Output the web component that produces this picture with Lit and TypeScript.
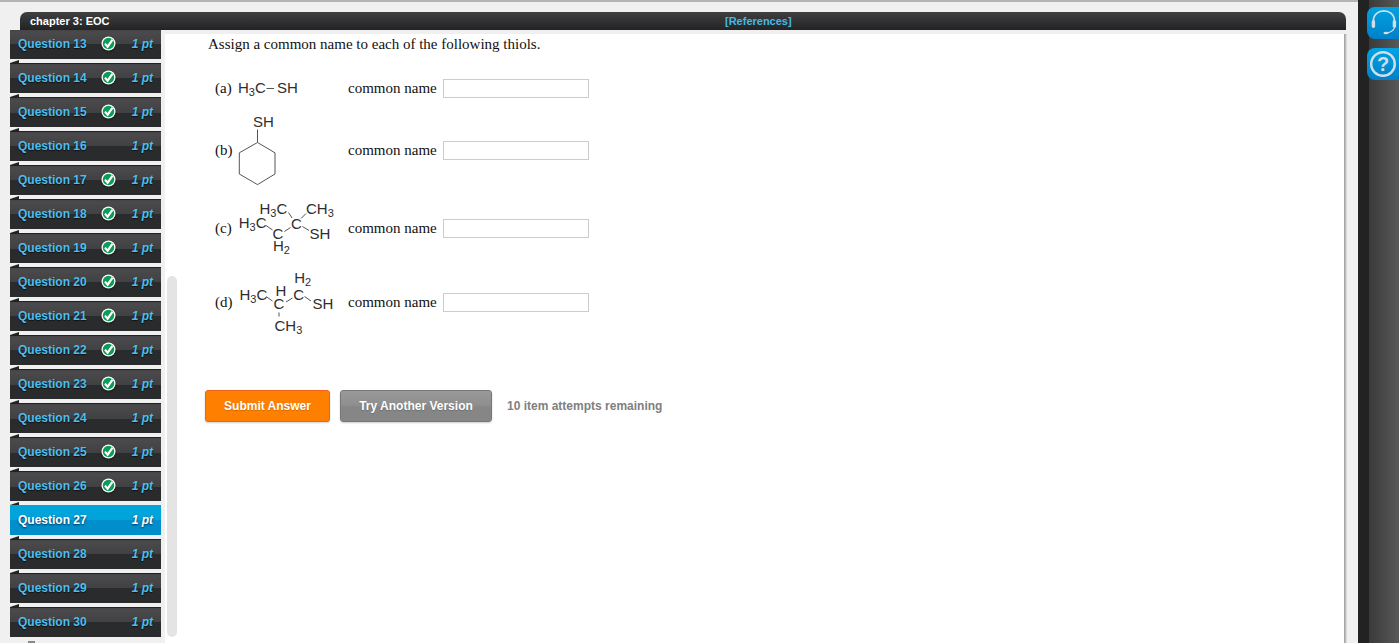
import { LitElement, html, css, svg } from "lit";
import { customElement } from "lit/decorators.js";

type Seg = [number, number, number, number];

const label = (x: number, y: number, s: string) => {
  const parts = s.split(/(\d)/).filter((p) => p !== "");
  let sub = false;
  return svg`<text x=${x} y=${y}>${parts.map((p) => {
    const isNum = /\d/.test(p);
    const dy = isNum ? 3 : sub ? -3 : 0;
    sub = isNum;
    return svg`<tspan class=${isNum ? "sub" : ""} dy=${dy}>${p}</tspan>`;
  })}</text>`;
};

const molecule = (box: [number, number, number, number], texts: [number, number, string][], bonds: Seg[], extra?: unknown) => html`
  <svg class="mol" width=${box[2]} height=${box[3]} viewBox=${box.join(" ")}>
    ${bonds.map(([a, b, c, d]) => svg`<line x1=${a} y1=${b} x2=${c} y2=${d}></line>`)}
    ${extra}
    ${texts.map(([x, y, s]) => label(x, y, s))}
  </svg>`;

const molA = () => molecule([238, 78, 110, 20], [[238, 93, "H3C"], [277, 93, "SH"]], [[266.5, 88.5, 274, 88.5]]);
const molB = () => molecule([238, 112, 110, 76], [[253, 126.5, "SH"]], [[257.5, 129.5, 257.5, 142.5]],
  svg`<polygon points="257.5,142.5 275,152.8 275,174 257.5,184.6 239.3,174 239.3,152.8"></polygon>`);
const molC = () => molecule([238, 198, 110, 60],
  [[259.5, 214.3, "H3C"], [306, 214.3, "CH3"], [291, 228.5, "C"], [238.7, 228.3, "H3C"], [272.6, 239, "C"], [273, 251, "H2"], [309.5, 239, "SH"]],
  [[288.5, 212.5, 292, 218], [306, 213.5, 301, 218.5], [266, 225.5, 272.5, 230], [284.5, 231.5, 290.5, 227.5], [302.5, 226.5, 309, 230.5]]);
const molD = () => molecule([238, 270, 110, 64],
  [[294.2, 283.3, "H2"], [239.5, 300, "H3C"], [275.5, 295.5, "H"], [273.5, 309.3, "C"], [293.3, 300, "C"], [312.5, 308.5, "SH"], [274.5, 330.5, "CH3"]],
  [[266, 296.5, 272.5, 301], [286, 302, 292.5, 298], [304.5, 296.5, 311, 301], [279, 312.5, 279, 316.5]]);

const QUESTIONS = [13, 14, 15, 16, 17, 18, 19, 20, 21, 22, 23, 24, 25, 26, 27, 28, 29, 30];
const UNCHECKED = new Set([16, 24, 27, 28, 29, 30]);
const CURRENT = 27;

@customElement("app-root")
export class AppRoot extends LitElement {
  static styles = css`
    :host { display: block; width: 1399px; height: 643px; overflow: hidden; position: relative; font-family: "Liberation Sans", Arial, sans-serif; }
    .page { display: flex; width: 1399px; height: 643px; }
    .main { width: 1358px; height: 643px; background: #f0f0f0; border-top: 2px solid #b4b4b4; box-sizing: border-box; position: relative; overflow: hidden; padding-top: 10px; }
    .header { margin-left: 20px; width: 1326px; height: 18px; box-sizing: border-box; padding: 0 10px; border-radius: 7px 7px 0 0; background: linear-gradient(#3f4042, #232324); display: flex; align-items: center; font-size: 11px; font-weight: 700; color: #fff; position: relative; }
    .refs { position: absolute; left: 705px; color: #47b9e6; }
    .body { display: flex; height: 613px; }
    .side { width: 165px; box-sizing: border-box; padding-left: 10px; overflow: hidden; flex: none; }
    .q { position: relative; display: grid; grid-template-columns: 83px 15px 1fr; align-items: center; width: 151px; height: 30px; margin-bottom: 4px; box-sizing: border-box; padding: 0 8px 2px 8px; background: linear-gradient(#444446 0, #4a4a4c 2px, #414143 50%, #2a2b2d 50%, #2a2b2d 100%); border-top: 1px solid #222; font-size: 12px; font-weight: 700; color: #4dbfee; text-shadow: 0 1px 1px #111; }
    .q:first-child { margin-top: -1px; border-top-color: #444; }
    .q::before { content: ""; position: absolute; left: 0; top: -4px; width: 9px; height: 3px; background: #222; clip-path: polygon(0 100%, 100% 0, 100% 100%); }
    .q.cur { background: linear-gradient(#00a5dc 0, #00a3da 50%, #008fcd 50%, #008ecb 100%); color: #fff; border-top-color: #00a5dc; text-shadow: 0 1px 2px #035; }
    .pt { font-style: italic; justify-self: end; }
    .check { display: block; filter: drop-shadow(0 1px 1px #0006); }
    .content { width: 1179px; height: 609px; margin-top: 4px; background: #fff; box-shadow: 1px 0 0 #a6a6a6, 2px 0 0 #bdbdbd, 3px 0 0 #dcdcdc; font-family: "Liberation Serif", "Times New Roman", serif; font-size: 15px; color: #111; position: relative; }
    .scroll { position: absolute; left: 2px; top: 242px; width: 10px; height: 361px; background: #e4e4e4; border-radius: 5px; }
    .prompt { height: 20px; line-height: 20px; padding-left: 43px; }
    .rows { padding-left: 50px; }
    .row { display: flex; align-items: center; }
    .ra { margin-top: 24px; height: 20px; }
    .rb { margin-top: 14px; height: 76px; }
    .rc { margin-top: 10px; height: 60px; }
    .rd { margin-top: 12px; height: 64px; }
    .tag { width: 23px; flex: none; }
    .mol { flex: none; overflow: visible; display: block; }
    .mol text { font-family: "Liberation Sans", Arial, sans-serif; font-size: 15px; fill: #2e2e2e; }
    .mol .sub { font-size: 11px; }
    .mol line, .mol polygon { stroke: #555; stroke-width: 1; fill: none; }
    .cn { width: 95px; flex: none; }
    input { width: 146px; height: 19px; box-sizing: border-box; border: 1px solid #ccc; background: #fff; padding: 0; margin: 0; outline: none; }
    .actions { display: flex; align-items: center; margin-top: 56px; padding-left: 40px; font-family: "Liberation Sans", Arial, sans-serif; font-size: 12px; font-weight: 700; }
    .btn { height: 32px; box-sizing: border-box; border-radius: 3px; color: #fff; display: flex; align-items: center; justify-content: center; box-shadow: 0 1px 2px #0003; text-shadow: 0 1px 1px #0003; }
    .submit { width: 125px; background: #ff8000; border: 1px solid #f2631a; }
    .try { width: 152px; margin-left: 10px; background: linear-gradient(#999 0, #8f8f8f 45%, #868686 55%, #868686 100%); border: 1px solid #777; }
    .remain { margin-left: 15px; color: #808080; }
    .rail { width: 41px; height: 643px; box-sizing: border-box; padding: 7px 0 0 9px; background: linear-gradient(90deg, #222 0 11px, #3a3a3a 11px, #585858 100%); display: flex; flex-direction: column; gap: 9px; overflow: hidden; }
    .rb-icon { width: 44px; height: 32px; flex: none; border-radius: 8px; background: linear-gradient(#00a3e2, #0080c8); display: block; }
    .rb-icon text { font-family: "Liberation Sans", Arial, sans-serif; font-weight: 700; font-size: 20px; fill: #cfdfe7; }
    .mark { position: absolute; left: 28px; top: 639px; width: 7px; height: 2px; background: #888; }
  `;

  private check() {
    return html`<svg class="check" width="15" height="15" viewBox="0 0 15 15">
      <circle cx="7.5" cy="7.5" r="7" fill="#fff"></circle>
      <circle cx="7.5" cy="7.5" r="5.7" fill="#0b9c57"></circle>
      <path d="M4 7.6 L6.6 10.6 L11.4 3.8" fill="none" stroke="#fff" stroke-width="2.2"></path>
    </svg>`;
  }

  render() {
    return html`<div class="page">
      <div class="main">
        <div class="header"><span>chapter 3: EOC</span><span class="refs">[References]</span></div>
        <div class="body">
          <div class="side">
            ${QUESTIONS.map((n) => html`<div class="q ${n === CURRENT ? "cur" : ""}">
              <span>Question ${n}</span>
              ${UNCHECKED.has(n) ? html`<span></span>` : this.check()}
              <span class="pt">1 pt</span>
            </div>`)}
          </div>
          <div class="content">
            <div class="scroll"></div>
            <div class="prompt">Assign a common name to each of the following thiols.</div>
            <div class="rows">
              <div class="row ra"><span class="tag">(a)</span>${molA()}<span class="cn">common name</span><input aria-label="a" /></div>
              <div class="row rb"><span class="tag">(b)</span>${molB()}<span class="cn">common name</span><input aria-label="b" /></div>
              <div class="row rc"><span class="tag">(c)</span>${molC()}<span class="cn">common name</span><input aria-label="c" /></div>
              <div class="row rd"><span class="tag">(d)</span>${molD()}<span class="cn">common name</span><input aria-label="d" /></div>
            </div>
            <div class="actions">
              <div class="btn submit">Submit Answer</div>
              <div class="btn try">Try Another Version</div>
              <span class="remain">10 item attempts remaining</span>
            </div>
          </div>
        </div>
        <div class="mark"></div>
      </div>
      <div class="rail">
        <svg class="rb-icon" viewBox="0 0 44 32">
          <path d="M6.4 14 C6.4 0.5 27.4 0.5 27.4 14" fill="none" stroke="#cfdfe7" stroke-width="1.7"></path>
          <rect x="4.7" y="13" width="3.4" height="8" rx="1.7" fill="#cfdfe7"></rect>
          <rect x="25.7" y="13" width="3.4" height="8" rx="1.7" fill="#cfdfe7"></rect>
          <path d="M27.4 21 C26 24 24 25.3 20 25.8" fill="none" stroke="#cfdfe7" stroke-width="1.2"></path>
          <ellipse cx="19" cy="26" rx="2.6" ry="1.2" fill="#cfdfe7"></ellipse>
        </svg>
        <svg class="rb-icon" viewBox="0 0 44 32">
          <circle cx="16" cy="16" r="11.8" fill="none" stroke="#cfdfe7" stroke-width="2.4"></circle>
          <text x="16" y="23" text-anchor="middle">?</text>
        </svg>
      </div>
    </div>`;
  }
}
